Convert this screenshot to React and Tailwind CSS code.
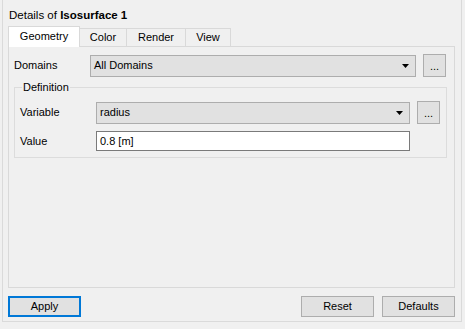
const font = { fontFamily: '"Liberation Sans", Arial, sans-serif' };

// Dropdown arrow used in the combo boxes
const Arrow = () => (
  <svg width="7" height="4" viewBox="0 0 7 4" className="shrink-0">
    <path d="M0 0H7L3.5 4Z" fill="#000" />
  </svg>
);

const Combo = ({ value, width }) => (
  <div
    className={`${width} h-[22px] flex items-center justify-between pl-[3px] pr-[6px] bg-[#e1e1e1] border border-[#adadad]`}
  >
    <span>{value}</span>
    <Arrow />
  </div>
);

const Dots = () => (
  <div className="w-[23px] h-[23px] ml-[7px] flex items-end justify-center pb-[4px] bg-[#e1e1e1] border border-[#adadad] leading-none">
    ...
  </div>
);

const Button = ({ label, focused }) => (
  <div
    className={`w-[73px] h-[21px] flex items-center justify-center bg-[#e1e1e1] ${
      focused ? "border-2 border-[#0078d7]" : "border border-[#adadad]"
    }`}
  >
    {label}
  </div>
);

const tabs = [
  { name: "Geometry", w: "w-[72px]" },
  { name: "Color", w: "w-[47px]" },
  { name: "Render", w: "w-[59px]" },
  { name: "View", w: "w-[45px]" },
];

export default function App() {
  return (
    <div className="w-[465px] h-[329px] bg-[#f0f0f0] text-[11px] text-black overflow-hidden" style={font}>
      <div className="ml-[2px] w-[460px] h-[322px] border-l border-r border-b border-[#dadada]">
        {/* Title */}
        <div className="pt-[8px] pl-[6px] h-[24px] leading-[14px] text-[11.5px]">
          Details of <span className="font-bold">Isosurface 1</span>
        </div>

        {/* Tab bar */}
        <div className="ml-[5px] mt-[2px] flex items-end h-[20px]">
          {tabs.map((t, i) =>
            i === 0 ? (
              <div
                key={t.name}
                className={`${t.w} h-[21px] flex items-center justify-center bg-white border border-b-0 border-[#d9d9d9] relative z-10 -mb-px pb-[2px]`}
              >
                {t.name}
              </div>
            ) : (
              <div
                key={t.name}
                className={`${t.w} h-[18px] flex items-center justify-center border border-l-0 border-b-0 border-[#d9d9d9]`}
              >
                {t.name}
              </div>
            )
          )}
        </div>

        {/* Tab pane */}
        <div className="ml-[5px] w-[447px] h-[242px] border border-[#d9d9d9] pt-[7px] pl-[5px]">
          <div className="flex items-center">
            <div className="w-[76px]">Domains</div>
            <Combo value="All Domains" width="w-[326px]" />
            <Dots />
          </div>

          {/* Definition group */}
          <div className="relative mt-[10px] w-[433px] border border-[#dcdcdc] pt-[13px] pl-[5px] pb-[6px]">
            <span className="absolute -top-[8px] left-[7px] px-[1px] bg-[#f0f0f0] leading-[14px]">
              Definition
            </span>
            <div className="flex items-center">
              <div className="w-[76px]">Variable</div>
              <Combo value="radius" width="w-[314px]" />
              <Dots />
            </div>
            <div className="flex items-center mt-[7px]">
              <div className="w-[76px]">Value</div>
              <div className="w-[314px] h-[20px] flex items-center pl-[3px] bg-white border border-[#7a7a7a]">
                0.8 [m]
              </div>
            </div>
          </div>
        </div>

        {/* Bottom buttons */}
        <div className="ml-[5px] mt-[8px] w-[447px] flex items-center">
          <Button label="Apply" focused />
          <div className="flex-1" />
          <Button label="Reset" />
          <div className="w-[8px]" />
          <Button label="Defaults" />
        </div>
      </div>
    </div>
  );
}
